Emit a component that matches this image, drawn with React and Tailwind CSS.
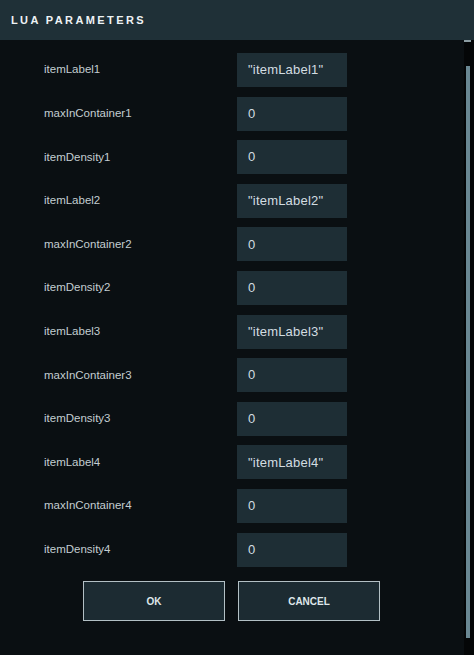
import React from "react";

const rows = [
  ["itemLabel1", '"itemLabel1"'],
  ["maxInContainer1", "0"],
  ["itemDensity1", "0"],
  ["itemLabel2", '"itemLabel2"'],
  ["maxInContainer2", "0"],
  ["itemDensity2", "0"],
  ["itemLabel3", '"itemLabel3"'],
  ["maxInContainer3", "0"],
  ["itemDensity3", "0"],
  ["itemLabel4", '"itemLabel4"'],
  ["maxInContainer4", "0"],
  ["itemDensity4", "0"],
];

export default function App() {
  return (
    <div
      className="w-[474px] h-[655px] bg-[#0a0f12] flex flex-col overflow-hidden"
      style={{ fontFamily: '"Liberation Sans", Arial, sans-serif' }}
    >
      <div className="h-[40px] shrink-0 bg-[#1f3037] flex items-center pl-[11px]">
        <span className="text-[11px] font-bold tracking-[2.4px] text-[#eef3f5] leading-none">
          LUA PARAMETERS
        </span>
      </div>
      <div className="flex flex-1 min-h-0">
        <div className="flex-1 flex flex-col pt-[13px]">
          {rows.map(([label, value]) => (
            <div key={label} className="h-[43.6px] flex items-start">
              <div className="w-[237px] pl-[44px] h-[34px] flex items-center text-[11.5px] text-[#c3cdd1]">
                {label}
              </div>
              <div className="w-[110px] h-[34px] bg-[#1e2e35] flex items-center pl-[11px] text-[13px] tracking-[0.2px] text-[#d3dde1]">
                {value}
              </div>
            </div>
          ))}
          <div className="flex gap-[13px] pl-[83px] mt-[5px]">
            <div className="w-[142px] h-[40px] border-[1.5px] border-[#b3c0c5] bg-[#1c2b32] flex items-center justify-center text-[10px] font-bold text-[#dfe7ea]">
              OK
            </div>
            <div className="w-[142px] h-[40px] border-[1.5px] border-[#b3c0c5] bg-[#1c2b32] flex items-center justify-center text-[10px] font-bold text-[#dfe7ea]">
              CANCEL
            </div>
          </div>
        </div>
        <div className="w-[10px] shrink-0 bg-[#040607] flex flex-col items-start">
          <div className="w-[7px] h-[2px] bg-[#8b9ca2]" />
          <div className="ml-[2px] mt-[24px] w-[4px] h-[572px] bg-[#6a8893]" />
        </div>
      </div>
    </div>
  );
}
